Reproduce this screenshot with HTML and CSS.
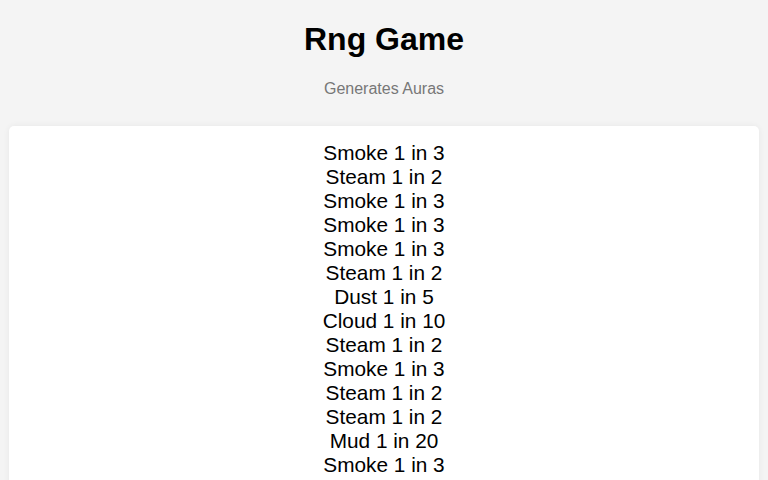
FILE: index.html
```html
<!DOCTYPE html>
<html lang="en">
<head>
    <meta charset="UTF-8">
    <meta name="viewport" content="width=device-width, initial-scale=1.0">
    <title>Rng Game</title>
    <link rel="stylesheet" href="styles.css">
</head>
<body>

    <h1>Rng Game</h1>
    <p class="subtitle">Generates Auras</p>

    <div class="results" id="results">
        <div class="aura">Smoke 1 in 3</div>
        <div class="aura">Steam 1 in 2</div>
        <div class="aura">Smoke 1 in 3</div>
        <div class="aura">Smoke 1 in 3</div>
        <div class="aura">Smoke 1 in 3</div>
        <div class="aura">Steam 1 in 2</div>
        <div class="aura">Dust 1 in 5</div>
        <div class="aura">Cloud 1 in 10</div>
        <div class="aura">Steam 1 in 2</div>
        <div class="aura">Smoke 1 in 3</div>
        <div class="aura">Steam 1 in 2</div>
        <div class="aura">Steam 1 in 2</div>
        <div class="aura">Mud 1 in 20</div>
        <div class="aura">Smoke 1 in 3</div>
    </div>

</body>
</html>
```

FILE: styles.css
```css
body {
    font-family: Arial, "Liberation Sans", sans-serif;
    margin: 0;
    padding: 0 9px;
    background-color: #f4f4f4;
    text-align: center;
}

h1 {
    font-size: 32px;
    margin: 21px 0;
}

.subtitle {
    color: #777;
    font-size: 16px;
    margin: 22px 0 28px;
}

.results {
    background-color: white;
    padding: 15px;
    border-radius: 5px;
    box-shadow: 0 0 6px rgba(0, 0, 0, 0.06);
}

.aura {
    font-size: 1.3em;
    line-height: 24px;
}
```
